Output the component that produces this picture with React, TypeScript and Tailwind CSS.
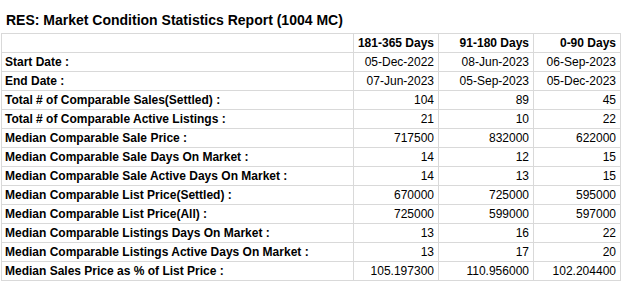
const rows: [string, string, string, string][] = [
  ['Start Date :', '05-Dec-2022', '08-Jun-2023', '06-Sep-2023'],
  ['End Date :', '07-Jun-2023', '05-Sep-2023', '05-Dec-2023'],
  ['Total # of Comparable Sales(Settled) :', '104', '89', '45'],
  ['Total # of Comparable Active Listings :', '21', '10', '22'],
  ['Median Comparable Sale Price :', '717500', '832000', '622000'],
  ['Median Comparable Sale Days On Market :', '14', '12', '15'],
  ['Median Comparable Sale Active Days On Market :', '14', '13', '15'],
  ['Median Comparable List Price(Settled) :', '670000', '725000', '595000'],
  ['Median Comparable List Price(All) :', '725000', '599000', '597000'],
  ['Median Comparable Listings Days On Market :', '13', '16', '22'],
  ['Median Comparable Listings Active Days On Market :', '13', '17', '20'],
  ['Median Sales Price as % of List Price :', '105.197300', '110.956000', '102.204400'],
]

const cell = 'h-[19px] border border-[#d9d9d9] p-0 align-middle'

export default function App() {
  return (
    <div className="w-[626px] h-[293px] bg-white text-black font-['Liberation_Sans',Arial,sans-serif]">
      <div className="h-[33px] pl-[6px] pt-[12px] text-[14px] font-bold leading-[16px]">
        RES: Market Condition Statistics Report (1004 MC)
      </div>
      <table className="ml-px w-[619px] table-fixed border-collapse text-[12px] leading-[14px]">
        <colgroup>
          <col className="w-[352px]" />
          <col className="w-[85px]" />
          <col className="w-[95px]" />
          <col className="w-[87px]" />
        </colgroup>
        <tbody>
          <tr className="font-bold">
            <td className={cell}></td>
            <td className={`${cell} pr-[4px] text-right`}>181-365 Days</td>
            <td className={`${cell} pr-[4px] text-right`}>91-180 Days</td>
            <td className={`${cell} pr-[4px] text-right`}>0-90 Days</td>
          </tr>
          {rows.map(([label, a, b, c]) => (
            <tr key={label}>
              <td className={`${cell} pl-[3px] font-bold whitespace-nowrap`}>{label}</td>
              <td className={`${cell} pr-[4px] text-right`}>{a}</td>
              <td className={`${cell} pr-[4px] text-right`}>{b}</td>
              <td className={`${cell} pr-[4px] text-right`}>{c}</td>
            </tr>
          ))}
        </tbody>
      </table>
    </div>
  )
}
